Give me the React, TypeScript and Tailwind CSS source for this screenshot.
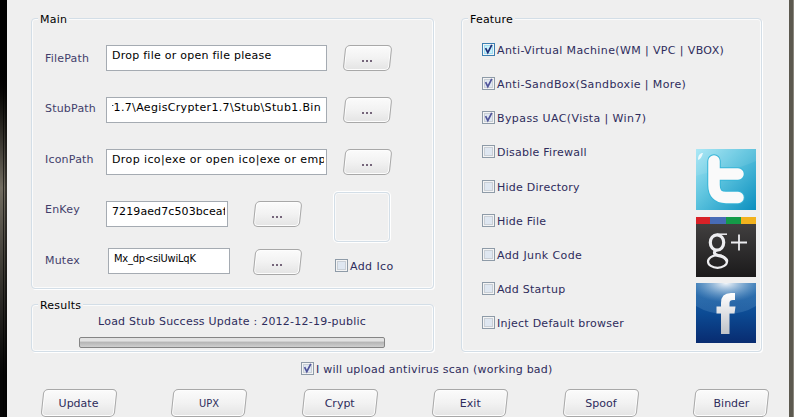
import type { ReactNode } from "react";
import clsx from "clsx";

const TEXT = "font-['DejaVu_Sans'] text-[11px] leading-[13px] whitespace-nowrap";
const INK = "text-[#2e2c5c]";

function Group({
  title,
  className,
  children,
}: {
  title: string;
  className?: string;
  children: ReactNode;
}) {
  return (
    <section
      className={clsx(
        "relative rounded-[4px] border border-[#d3dee7] shadow-[inset_0_0_0_1px_#fbfbfb,1px_1px_0_#fff]",
        className,
      )}
    >
      <h2
        className={clsx(
          TEXT,
          "absolute -top-1.5 left-1.5 bg-[#efefef] px-0.5 tracking-[0.2px] text-black",
        )}
      >
        {title}
      </h2>
      {children}
    </section>
  );
}

function SkinButton({
  className,
  textClassName,
  children,
}: {
  className?: string;
  textClassName?: string;
  children: ReactNode;
}) {
  return (
    <button
      type="button"
      className={clsx(TEXT, INK, "relative flex shrink-0 items-start justify-center", className)}
    >
      <span className="absolute inset-y-0 left-[1.5px] right-[1.5px] -skew-x-6 rounded-[5px] border border-[#a8a8a8] bg-linear-to-b from-[#fbfbfb] from-0% via-[#f2f2f2] via-50% to-[#e4e4e4] to-100% shadow-[inset_0_0_0_1px_#fdfdfd]" />
      <span className={clsx("relative", textClassName)}>{children}</span>
    </button>
  );
}

function BrowseButton({ className }: { className?: string }) {
  return (
    <SkinButton className={clsx("h-[26px] w-[50px] pt-[7px]", className)}>
      <span className="flex gap-[2px] pt-[8px]">
        <span className="size-[2px] bg-[#75657a]" />
        <span className="size-[2px] bg-[#75657a]" />
        <span className="size-[2px] bg-[#75657a]" />
      </span>
    </SkinButton>
  );
}

function Field({
  className,
  textClassName = "tracking-[0.25px]",
  children,
}: {
  className?: string;
  textClassName?: string;
  children: ReactNode;
}) {
  return (
    <div
      className={clsx(
        "flex h-[26px] shrink-0 border border-[#a5abb2] bg-white pl-[5px] pt-[3px] text-black",
        className,
      )}
    >
      <div className={clsx(TEXT, "flex min-w-0 flex-1 overflow-hidden", textClassName)}>
        <span className="shrink-0">{children}</span>
      </div>
    </div>
  );
}

function Label({ className, children }: { className?: string; children: ReactNode }) {
  return (
    <span
      className={clsx(TEXT, "w-[61px] shrink-0 tracking-[0.2px] text-[#423e6b]", className)}
    >
      {children}
    </span>
  );
}

function Check({
  label,
  checked,
  hot,
  className = "tracking-[0.25px]",
}: {
  label: string;
  checked?: boolean;
  hot?: boolean;
  className?: string;
}) {
  return (
    <label className={clsx("flex h-[13px] items-start gap-[2px]", className)}>
      <span
        className={clsx(
          "grid size-[13px] shrink-0 place-items-center border bg-[#f4f4f4]",
          hot ? "border-[#3c7fb1]" : "border-[#8e9ba8]",
        )}
      >
        <svg viewBox="0 0 11 11" className="size-[11px]">
          <rect
            x="1.5"
            y="1.5"
            width="8"
            height="8"
            fill={hot ? "#c9f1fb" : "#dfe7f1"}
            stroke={hot ? "#9edcf2" : "#c9cfd6"}
          />
          {checked && (
            <path
              d="M2.6 4.2 4.8 8.6 8.8 0.8"
              fill="none"
              stroke={hot ? "#1d2c75" : "#50549a"}
              strokeWidth="1.7"
            />
          )}
        </svg>
      </span>
      <span className={clsx(TEXT, INK, "pt-px")}>{label}</span>
    </label>
  );
}

function TwitterTile() {
  return (
    <svg viewBox="0 0 60 61" className="h-[61px] w-[60px]">
      <defs>
        <linearGradient id="tw" x1="0" y1="0" x2="1" y2="1">
          <stop offset="0" stopColor="#a5e6f5" />
          <stop offset=".45" stopColor="#5cc3de" />
          <stop offset="1" stopColor="#0b8fbf" />
        </linearGradient>
      </defs>
      <rect width="60" height="61" fill="url(#tw)" />
      <path d="M0 27C15 21 35 24 60 12V0H0z" fill="#fff" opacity=".08" />
      <path d="M2 11C2 6 4 4 7 4 6 7 5 10 2 11" fill="#fff" opacity=".8" />
      <path
        d="M18 12V36Q18 48.500 30 48.500H42M18 25H42"
        fill="none"
        stroke="#37b5d8"
        strokeWidth="13.500"
        strokeLinecap="round"
      />
      <path
        d="M18 12V36Q18 48.500 30 48.500H42M18 25H42"
        fill="none"
        stroke="#fafafa"
        strokeWidth="11.500"
        strokeLinecap="round"
      />
    </svg>
  );
}

function GooglePlusTile() {
  return (
    <svg viewBox="0 0 60 60" className="size-[60px]">
      <defs>
        <linearGradient id="gp" x1="0" y1="0" x2="0" y2="1">
          <stop offset="0" stopColor="#464444" />
          <stop offset="1" stopColor="#1b1a1b" />
        </linearGradient>
      </defs>
      <rect width="60" height="60" fill="url(#gp)" />
      <rect width="14" height="7" fill="#d82127" />
      <rect x="14" width="16" height="7" fill="#476bb5" />
      <rect x="30" width="15" height="7" fill="#149a48" />
      <rect x="45" width="15" height="7" fill="#f2b21d" />
      <g fill="none" stroke="#ededf0">
        <ellipse cx="21" cy="25.500" rx="6.700" ry="7.700" strokeWidth="3.200" />
        <path d="M21 17.200H31" strokeWidth="1.500" />
        <path d="M20 33Q16 36.500 22 38.500 30 40 31 44.500" strokeWidth="3" />
        <ellipse cx="21.500" cy="44.500" rx="9.500" ry="6.300" strokeWidth="2.200" />
        <path d="M35 25.500H51M43 17.500V33.500" strokeWidth="1.800" />
      </g>
    </svg>
  );
}

function FacebookTile() {
  return (
    <svg viewBox="0 0 60 60" className="size-[60px]">
      <defs>
        <linearGradient id="fb" x1="0" y1="0" x2="0" y2="1">
          <stop offset="0" stopColor="#1d65a8" />
          <stop offset=".5" stopColor="#0c4b94" />
          <stop offset="1" stopColor="#082b70" />
        </linearGradient>
        <radialGradient id="fbGloss" cx=".5" cy="0" r=".62">
          <stop offset="0" stopColor="#fff" stopOpacity=".95" />
          <stop offset="1" stopColor="#6fa5d3" stopOpacity=".25" />
        </radialGradient>
        <linearGradient id="fbMark" x1="0" y1="0" x2="0" y2="1">
          <stop offset="0" stopColor="#fff" />
          <stop offset="1" stopColor="#bfc2c8" />
        </linearGradient>
      </defs>
      <rect width="60" height="60" fill="url(#fb)" />
      <path d="M0 0H60V23Q47 31 30 31T0 23z" fill="url(#fbGloss)" />
      <path
        d="M25 51V30.500H20.500V23.500H25V20Q25 10 35 10H39V17H37Q33.500 17 33.500 20V23.500H39.500L38.500 30.500H33.500V51z"
        fill="url(#fbMark)"
      />
    </svg>
  );
}

const actions = ["Update", "UPX", "Crypt", "Exit", "Spoof", "Binder"];

export default function App() {
  return (
    <div className="flex h-[417px] w-[794px] overflow-hidden bg-[#efefef]">
      <div className="flex w-[7px] shrink-0 bg-linear-to-b from-black from-15% via-[#716c60] via-45% to-[#050505] to-90%">
        <span className="ml-[3px] w-px bg-black/60" />
        <span className="ml-px w-[2px] bg-black/50" />
      </div>

      <main className="flex min-w-0 flex-1 flex-col pt-[18px]">
        <div className="flex pl-[24px]">
          <div className="flex w-[403px] flex-col gap-[15px]">
            <Group title="Main" className="h-[271px] pl-[13px] pt-[26px]">
              <div className="flex flex-col gap-[26px]">
                <div className="flex">
                  <Label className="pt-[7px]">FilePath</Label>
                  <Field className="w-[221px] pr-[5px]">Drop file or open file please</Field>
                  <BrowseButton className="ml-[15px]" />
                </div>
                <div className="flex">
                  <Label className="pt-[5px]">StubPath</Label>
                  <Field
                    className="w-[221px] pr-[5px]"
                    textClassName="justify-end tracking-[0.34px]"
                  >
                    r1.7\AegisCrypter1.7\Stub\Stub1.Bin
                  </Field>
                  <BrowseButton className="ml-[15px]" />
                </div>
                <div className="flex">
                  <Label className="pt-[4px]">IconPath</Label>
                  <Field className="w-[221px] pr-[2px]" textClassName="tracking-[0.4px]">
                    Drop ico|exe or open ico|exe or empty
                  </Field>
                  <BrowseButton className="ml-[15px]" />
                </div>
              </div>

              <div className="flex gap-8">
                <div className="flex w-[257px] flex-col gap-[21px] pt-[26px]">
                  <div className="flex">
                    <Label className="pt-[2px]">EnKey</Label>
                    <Field className="w-[122px] pr-[2px]" textClassName="tracking-[0.1px]">
                      7219aed7c503bceaf
                    </Field>
                    <BrowseButton className="ml-6" />
                  </div>
                  <div className="flex">
                    <Label className="pt-[6px]">Mutex</Label>
                    <Field
                      className="ml-[2px] w-[122px]"
                      textClassName="font-['DejaVu_Sans_Condensed'] tracking-[-0.2px]"
                    >
                      Mx_dp&lt;siUwiLqK
                    </Field>
                    <BrowseButton className="ml-[22px] mt-px" />
                  </div>
                </div>
                <div className="pt-[17px]">
                  <div className="h-[50px] w-[56px] rounded-[4px] border border-[#d3dee7] shadow-[inset_0_0_0_1px_#f9f9f9,0_0_0_1px_#fff]" />
                  <Check label="Add Ico" className="ml-px mt-[17px] tracking-[0.4px]" />
                </div>
              </div>
            </Group>

            <Group title="Results" className="h-[48px] pt-[10px]">
              <p className={clsx(TEXT, INK, "pl-[66px] tracking-[0.23px]")}>
                Load Stub Success Update : 2012-12-19-public
              </p>
              <div className="ml-[47px] mt-[9px] h-[11px] w-[306px] rounded-[2px] border border-[#858585] bg-linear-to-b from-[#e2e2e2] from-30% via-[#b7b7b7] via-50% to-[#cfcfcf]" />
            </Group>
          </div>

          <Group title="Feature" className="ml-[27px] flex h-[334px] w-[301px] pl-[20px]">
            <div className="flex w-[214px] flex-col gap-[21px] pt-[24px]">
              <Check
                label="Anti-Virtual Machine(WM | VPC | VBOX)"
                checked
                hot
                className="tracking-[0.38px]"
              />
              <Check
                label="Anti-SandBox(Sandboxie | More)"
                checked
                className="tracking-[0.38px]"
              />
              <Check label="Bypass UAC(Vista | Win7)" checked className="tracking-[0.4px]" />
              <Check label="Disable Firewall" />
              <Check label="Hide Directory" className="mt-px tracking-[0.25px]" />
              <Check label="Hide File" />
              <Check label="Add Junk Code" className="tracking-[0.4px]" />
              <Check label="Add Startup" />
              <Check label="Inject Default browser" />
            </div>
            <div className="flex flex-col pt-[130px]">
              <TwitterTile />
              <div className="mt-[7px]">
                <GooglePlusTile />
              </div>
              <div className="mt-[6px]">
                <FacebookTile />
              </div>
            </div>
          </Group>
        </div>

        <Check
          label="I will upload antivirus scan (working bad)"
          checked
          className="ml-[294px] mt-[10px] tracking-[0.25px]"
        />

        <div className="ml-[33px] mt-[14px] flex w-[730px] justify-between">
          {actions.map((name) => (
            <SkinButton
              key={name}
              className="h-[28px] w-[77px] pt-[8px]"
              textClassName={name === "UPX" ? "font-['DejaVu_Sans_Condensed']" : undefined}
            >
              {name}
            </SkinButton>
          ))}
        </div>
      </main>

      <div className="w-[5px] shrink-0 border-r border-[#8a877e] bg-[#5c594f]" />
    </div>
  );
}
